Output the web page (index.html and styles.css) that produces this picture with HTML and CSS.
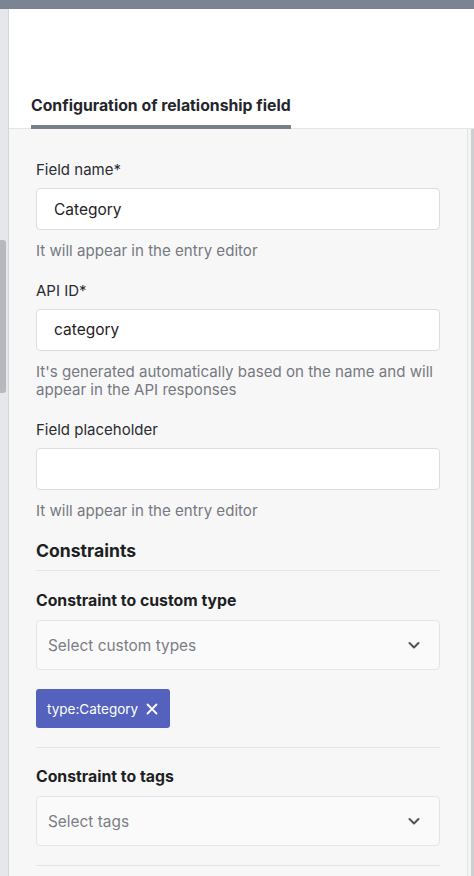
FILE: index.html
```html
<!DOCTYPE html>
<html lang="en">
<head>
<meta charset="utf-8">
<title>Configuration of relationship field</title>
<link rel="stylesheet" href="styles.css">
</head>
<body>
<div class="topbar"></div>
<div class="layout">
  <div class="rail"><div class="rail-thumb"></div></div>
  <div class="panel">
    <header class="panel-header">
      <div class="tab">Configuration of relationship field</div>
    </header>
    <div class="panel-body">
      <div class="content">
        <div class="field">
          <label class="label">Field name*</label>
          <div class="input">Category</div>
          <p class="help">It will appear in the entry editor</p>
        </div>
        <div class="field">
          <label class="label">API ID*</label>
          <div class="input">category</div>
          <p class="help">It's generated automatically based on the name and will appear in the API responses</p>
        </div>
        <div class="field">
          <label class="label">Field placeholder</label>
          <div class="input"></div>
          <p class="help">It will appear in the entry editor</p>
        </div>
        <h2 class="section-title">Constraints</h2>
        <div class="constraint">
          <h3 class="sub-title">Constraint to custom type</h3>
          <div class="select">
            <span class="placeholder">Select custom types</span>
            <svg class="chevron" width="14" height="14" viewBox="0 0 14 14"><path d="M2.5 5l4.5 4.5 4.5-4.5" fill="none" stroke="#50535a" stroke-width="2" stroke-linecap="round" stroke-linejoin="round"/></svg>
          </div>
          <div class="chips">
            <span class="chip">type:Category
              <svg class="chip-x" width="12" height="12" viewBox="0 0 12 12"><path d="M1.5 1.5l9 9M10.5 1.5l-9 9" stroke="#fff" stroke-width="1.8" stroke-linecap="round"/></svg>
            </span>
          </div>
        </div>
        <div class="constraint">
          <h3 class="sub-title">Constraint to tags</h3>
          <div class="select">
            <span class="placeholder">Select tags</span>
            <svg class="chevron" width="14" height="14" viewBox="0 0 14 14"><path d="M2.5 5l4.5 4.5 4.5-4.5" fill="none" stroke="#50535a" stroke-width="2" stroke-linecap="round" stroke-linejoin="round"/></svg>
          </div>
        </div>
      </div>
      <div class="scrollbar"><div class="scroll-thumb"></div></div>
    </div>
  </div>
</div>
</body>
</html>
```

FILE: styles.css
```css
* { box-sizing: border-box; }
html, body {
  margin: 0;
  padding: 0;
  width: 474px;
  height: 876px;
  overflow: hidden;
  font-family: Inter, "Noto Sans", "Liberation Sans", sans-serif;
  background: #f7f7f8;
}
.topbar {
  height: 9px;
  background: #7a8493;
}
.layout {
  display: flex;
  height: 867px;
}
.rail {
  width: 9px;
  flex: none;
  background: #e5e7eb;
  border-right: 1px solid #d3d6db;
  padding-top: 231px;
}
.rail-thumb {
  width: 6px;
  height: 153px;
  background: #b6b8bd;
  border-radius: 0 3px 3px 0;
}
.panel {
  flex: 1;
  display: flex;
  flex-direction: column;
  min-width: 0;
}
.panel-header {
  height: 120px;
  background: #ffffff;
  border-bottom: 1px solid #e3e4e7;
  display: flex;
  align-items: flex-end;
  padding-left: 22px;
}
.tab {
  font-size: 15.8px;
  font-weight: 700;
  color: #24262b;
  line-height: 20px;
  padding-bottom: 9px;
  border-bottom: 4px solid #777f8b;
  margin-bottom: -1px;
}
.panel-body {
  flex: 1;
  display: flex;
  background: #f7f7f8;
  min-height: 0;
}
.content {
  flex: 1;
  padding: 31px 27px 0 27px;
}
.scrollbar {
  width: 7px;
  flex: none;
  border-left: 1px solid #e3e4e7;
  background: #f4f4f5;
  display: flex;
  justify-content: flex-end;
}
.scroll-thumb {
  width: 3px;
  height: 100%;
  background: #cdcfd3;
}
.field {
  margin-bottom: 20px;
}
.label {
  display: block;
  font-size: 15px;
  line-height: 20px;
  color: #2a2c31;
  margin-bottom: 8px;
}
.input {
  height: 42px;
  background: #ffffff;
  border: 1px solid #dcdde1;
  border-radius: 4px;
  padding: 0 17px;
  display: flex;
  align-items: center;
  font-size: 15.5px;
  color: #1f2125;
}
.help {
  margin: 12px 0 0;
  font-size: 15.1px;
  line-height: 18.5px;
  color: #767980;
}
.section-title {
  margin: 19px 0 0;
  font-size: 17.6px;
  line-height: 22px;
  font-weight: 700;
  color: #1d1f23;
  padding-bottom: 8px;
  border-bottom: 1px solid #e3e4e7;
}
.constraint {
  padding: 20px 0 19px;
  border-bottom: 1px solid #e3e4e7;
}
.constraint + .constraint {
  padding-top: 19px;
}
.sub-title {
  margin: 0 0 9px;
  font-size: 15.8px;
  line-height: 20px;
  font-weight: 700;
  color: #1d1f23;
}
.select {
  height: 50px;
  background: #fafafb;
  border: 1px solid #e4e5e8;
  border-radius: 4px;
  display: flex;
  align-items: center;
  justify-content: space-between;
  padding: 0 18px 0 11px;
}
.placeholder {
  font-size: 15.4px;
  color: #7b7e85;
}
.chevron { display: block; }
.chips {
  margin-top: 19px;
  display: flex;
}
.chip {
  display: inline-flex;
  align-items: center;
  gap: 8px;
  height: 39px;
  padding: 0 12px 0 11px;
  background: #5462be;
  color: #ffffff;
  border-radius: 3px;
  font-size: 13.5px;
}
.chip-x { display: block; }
```
